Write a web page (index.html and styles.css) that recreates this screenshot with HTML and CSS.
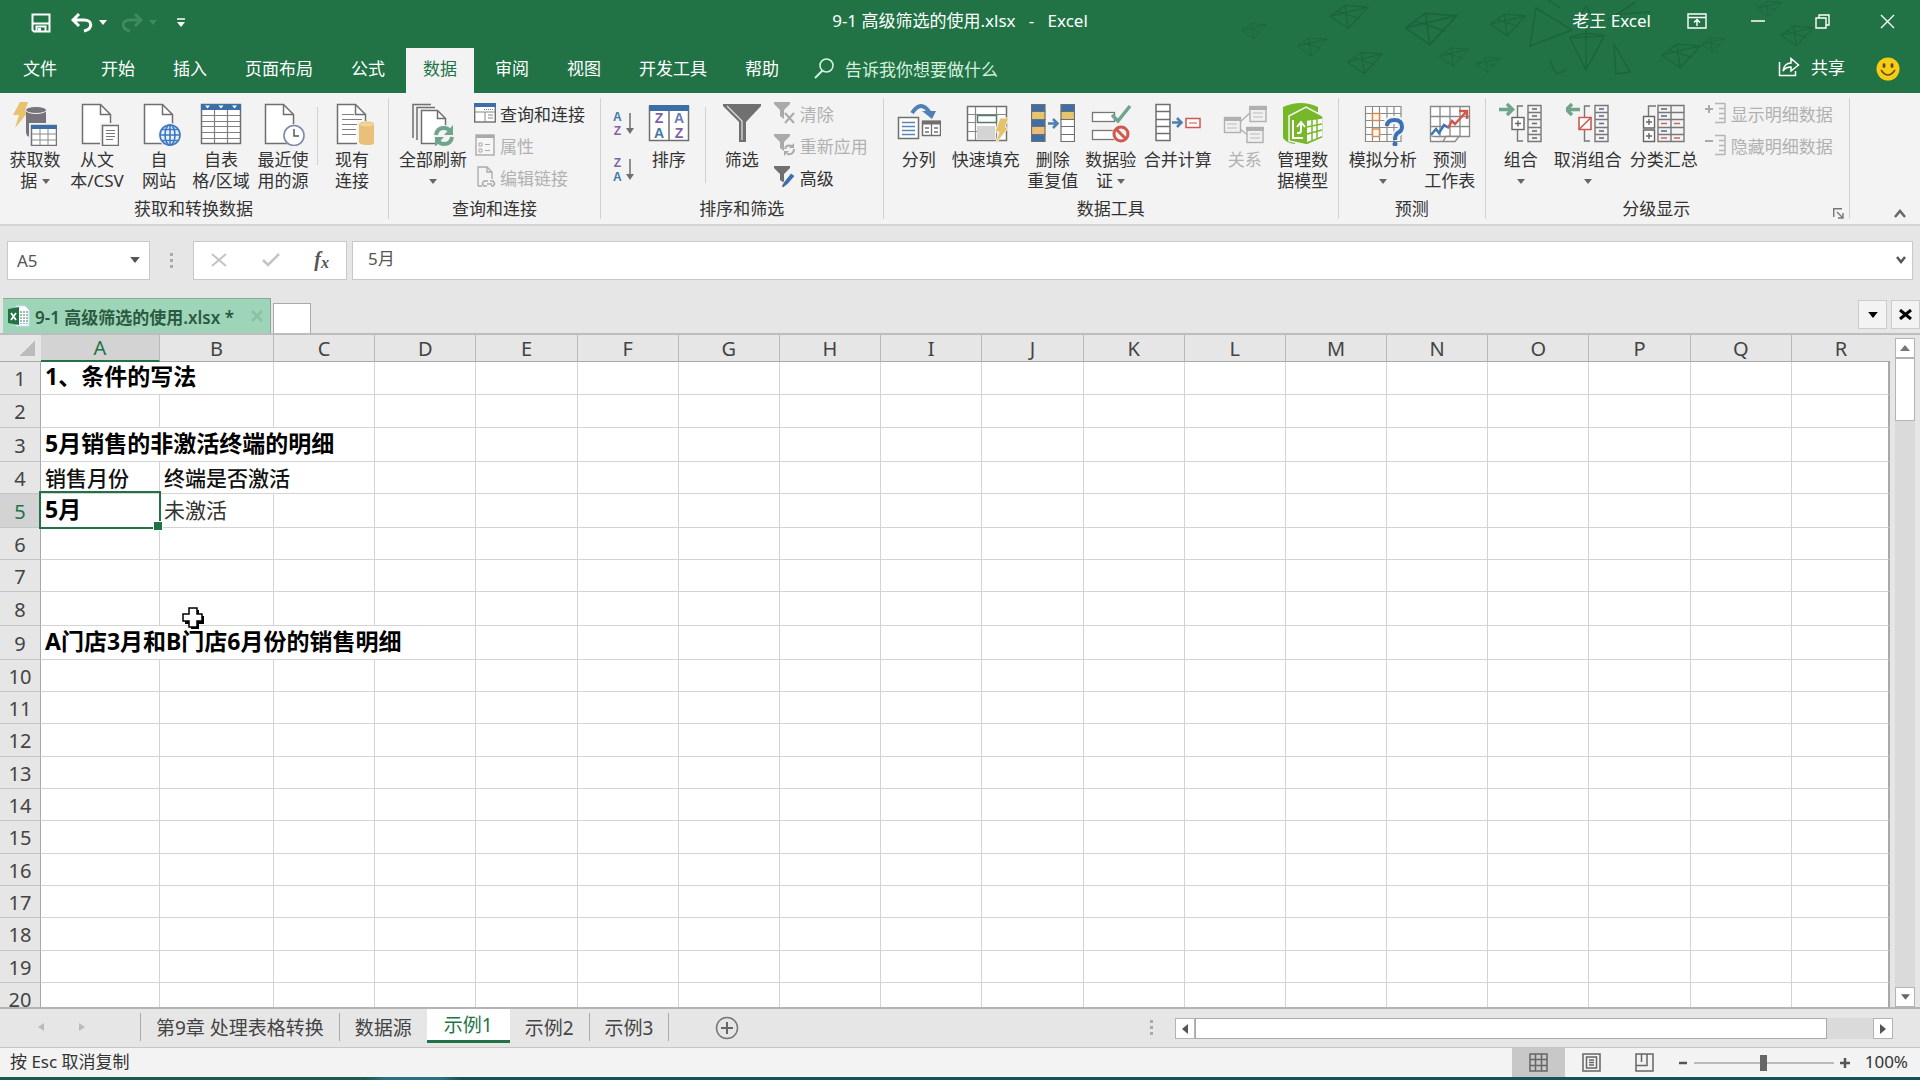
FILE: index.html
```html
<!DOCTYPE html>
<html lang="zh-CN">
<head>
  <meta charset="UTF-8">
  <meta name="viewport" content="width=device-width, initial-scale=1.0">
  <title>9-1 高级筛选的使用.xlsx - Excel</title>
  <link rel="stylesheet" href="styles.css">
</head>
<body>
  <!-- Shared icon shapes -->
  <svg class="defs" aria-hidden="true">
    <symbol id="doc" viewBox="0 0 44 44"><path d="M7.500 2.500H25.500L35.500 12.500V41.500H7.500Z" fill="#fff" stroke="#6f6f6f" stroke-width="1.500"/><path d="M25.500 2.500V12.500H35.500" fill="none" stroke="#6f6f6f" stroke-width="1.500"/></symbol>
    <symbol id="caret" viewBox="0 0 8 5"><path d="M0 0H8L4 5Z" fill="currentColor"/></symbol>
    <symbol id="funnel" viewBox="0 0 22 22"><path d="M0 0H16V2L10 8V17L6 14V8L0 2Z" fill="currentColor"/></symbol>
    <symbol id="kite" viewBox="0 0 50 34"><path d="M2 16L20 3L48 5L24 31ZM2 16L48 5M20 3L24 31M11 10L38 19" fill="none" stroke="currentColor" stroke-width="1.500"/></symbol>
  </svg>

  <header class="titlebar">
    <svg class="pattern" viewBox="0 0 690 93" aria-hidden="true">
      <use href="#kite" x="92" y="3" width="54" height="28"/>
      <use href="#kite" x="170" y="10" width="62" height="38"/>
      <use href="#kite" x="10" y="22" width="28" height="18"/>
      <use href="#kite" x="64" y="36" width="36" height="22"/>
      <use href="#kite" x="116" y="48" width="38" height="30"/>
      <use href="#kite" x="206" y="46" width="36" height="22"/>
      <use href="#kite" x="256" y="12" width="44" height="26"/>
      <use href="#kite" x="244" y="56" width="28" height="18"/>
      <path d="M300 46L306 8L342 30ZM340 38L356 70L374 36ZM356 70V20M346 24L356 6L366 24M384 44L386 74L400 72ZM330 8L318 0M378 20L406 2M320 60L326 74L336 70M390 14L420 12M340 38Q356 30 374 36" fill="none" stroke="currentColor" stroke-width="1.500"/>
      <use href="#kite" x="430" y="40" width="42" height="32"/>
      <use href="#kite" x="470" y="36" width="26" height="18"/>
      <use href="#kite" x="516" y="0" width="46" height="18"/>
      <use href="#kite" x="540" y="24" width="54" height="24"/>
    </svg>
    <div class="title-row">
      <div class="quick-access">
        <button aria-label="保存"><svg width="20" height="20" viewBox="0 0 20 20"><path d="M1.500 1.500H18.500V18.500H3L1.500 17ZM1.500 10.500H18.500M5.500 18V13.500H14.500V18" fill="none" stroke="#fff" stroke-width="2"/><path d="M7 15H10V18H7Z" fill="#fff"/></svg></button>
        <button class="undo" aria-label="撤消"><svg width="22" height="20" viewBox="0 0 22 20"><path d="M8 1L2 7L8 13M2 7H13C22 7 22 16 13 18" fill="none" stroke="#fff" stroke-width="3"/></svg><svg class="mini" width="8" height="5"><use href="#caret"/></svg></button>
        <button class="redo" aria-label="恢复" disabled><svg width="22" height="20" viewBox="0 0 22 20"><path d="M14 1L20 7L14 13M20 7H9C0 7 0 16 9 18" fill="none" stroke="currentColor" stroke-width="3"/></svg><svg class="mini" width="8" height="5"><use href="#caret"/></svg></button>
        <button aria-label="自定义快速访问工具栏"><svg width="8" height="10" viewBox="0 0 8 10"><path d="M0 1H8" stroke="#fff" stroke-width="1.500"/><path d="M0 4H8L4 9Z" fill="#fff"/></svg></button>
      </div>
      <div class="doc-title">9-1 高级筛选的使用.xlsx&nbsp;&nbsp; -&nbsp;&nbsp; Excel</div>
      <div class="window-controls">
        <span class="account">老王 Excel</span>
        <button aria-label="功能区显示选项"><svg width="20" height="16" viewBox="0 0 20 16"><path d="M1 1H19V15H1ZM1 4.500H19M10 13V7M7 9.500L10 6.500L13 9.500" fill="none" stroke="#fff" stroke-width="1.400"/></svg></button>
        <button aria-label="最小化"><svg width="14" height="14" viewBox="0 0 14 14"><path d="M0 7H14" stroke="#fff" stroke-width="1.500"/></svg></button>
        <button aria-label="还原"><svg width="15" height="15" viewBox="0 0 15 15"><path d="M1 4H11V14H1ZM4 4V1H14V11H11" fill="none" stroke="#fff" stroke-width="1.400"/></svg></button>
        <button aria-label="关闭"><svg width="15" height="15" viewBox="0 0 15 15"><path d="M1 1L14 14M14 1L1 14" stroke="#fff" stroke-width="1.400"/></svg></button>
      </div>
    </div>
    <nav class="tabs">
      <button class="tab file">文件</button>
      <button class="tab">开始</button>
      <button class="tab">插入</button>
      <button class="tab">页面布局</button>
      <button class="tab">公式</button>
      <button class="tab active">数据</button>
      <button class="tab">审阅</button>
      <button class="tab">视图</button>
      <button class="tab">开发工具</button>
      <button class="tab">帮助</button>
      <button class="tell-me"><svg width="21" height="21" viewBox="0 0 21 21"><circle cx="12.500" cy="7.500" r="6.500" fill="none" stroke="#d6f0df" stroke-width="1.600"/><path d="M8.500 12.500L1 20" stroke="#d6f0df" stroke-width="2"/></svg>告诉我你想要做什么</button>
      <button class="share"><svg width="22" height="20" viewBox="0 0 22 20"><path d="M1.500 5V18.500H17.500V14" fill="none" stroke="#fff" stroke-width="1.500"/><path d="M5 14C6 8 9 6 13 6V1.500L20.500 8L13 14V10C10 10 7 11 5 14Z" fill="none" stroke="#fff" stroke-width="1.500"/></svg>共享</button>
      <button class="smile" aria-label="反馈"><svg width="24" height="24" viewBox="0 0 24 24"><circle cx="12" cy="12" r="11.500" fill="#f8cc16"/><ellipse cx="8" cy="8.500" rx="1.500" ry="2.500" fill="#5c4a10"/><ellipse cx="16" cy="8.500" rx="1.500" ry="2.500" fill="#5c4a10"/><path d="M5 13Q12 23 19 13" fill="none" stroke="#5c4a10" stroke-width="1.500"/></svg></button>
    </nav>
  </header>

  <section class="ribbon">
    <!-- 获取和转换数据 -->
    <div class="group get-data">
      <div class="tools">
        <button class="big"><svg width="44" height="44" viewBox="0 0 44 44"><path d="M7 0H15L12 9H16L2 26L6 13H0Z" fill="#e9c26f"/><path d="M13 8V30Q13 35 18 35H33V8Z" fill="#77737a"/><ellipse cx="23" cy="8" rx="10.500" ry="3.500" fill="#77737a" stroke="#f3f3f3"/><rect x="16" y="21" width="28" height="23" fill="#f3f3f3"/><rect x="18.500" y="23.500" width="25" height="20" fill="#fff" stroke="#77737a" stroke-width="1.500"/><rect x="18" y="23" width="26" height="4" fill="#3d6ea8"/><path d="M27 27V43M35 27V43M19 32H43M19 38H43" stroke="#8a8a8a"/></svg><span>获取数<br>据 <svg width="8" height="5"><use href="#caret"/></svg></span></button>
        <button class="big"><svg width="44" height="44" viewBox="0 0 44 44"><use href="#doc"/><path d="M25 21H45V44H25Z" fill="#f3f3f3"/><path d="M27.500 23.500H43.500V43.500H27.500Z" fill="#fff" stroke="#6f6f6f" stroke-width="1.500"/><path d="M31 28.500H40M31 31.500H40M31 34.500H40M31 37.500H38" stroke="#777" stroke-width="1.200"/></svg><span>从文<br>本/CSV</span></button>
        <button class="big"><svg width="44" height="44" viewBox="0 0 44 44"><use href="#doc"/><circle cx="33" cy="33" r="12" fill="#f3f3f3"/><g fill="none" stroke="#3b78c3" stroke-width="1.600"><circle cx="33" cy="33" r="10" fill="#eaf3fc"/><ellipse cx="33" cy="33" rx="5" ry="10"/><path d="M33 23V43M23 33H43M25 27.500H41M25 38.500H41"/></g></svg><span>自<br>网站</span></button>
        <button class="big"><svg width="44" height="44" viewBox="0 0 44 44"><rect x="2.500" y="2.500" width="39" height="39" fill="#fff" stroke="#6f6f6f" stroke-width="1.500"/><rect x="2" y="2" width="40" height="6" fill="#3d6ea8"/><path d="M6 3.500H11L8.500 6.500ZM19.500 3.500H24.500L22 6.500ZM33 3.500H38L35.500 6.500Z" fill="#fff"/><path d="M15.500 8V41M28.500 8V41M3 13.500H41M3 19.500H41M3 24.500H41M3 30.500H41M3 36.500H41" stroke="#808080" stroke-width="1.200"/></svg><span>自表<br>格/区域</span></button>
        <button class="big"><svg width="44" height="44" viewBox="0 0 44 44"><use href="#doc" x="-3"/><circle cx="34" cy="33.500" r="11.500" fill="#f3f3f3"/><circle cx="33" cy="33.500" r="10" fill="#fff" stroke="#8088a8" stroke-width="1.600"/><path d="M33 27V34H38" fill="none" stroke="#555" stroke-width="1.500"/></svg><span>最近使<br>用的源</span></button>
        <i class="divider short"></i>
        <button class="big"><svg width="44" height="44" viewBox="0 0 44 44"><use href="#doc"/><path d="M12 12.500H24M12 17.500H32M12 22.500H30M12 27.500H26M12 32.500H26" stroke="#808080" stroke-width="1.200"/><path d="M27 19H46V44H27Z" fill="#f3f3f3"/><path d="M29 22V40Q29 43 37 43T45 40V22Z" fill="#e9c07a"/><ellipse cx="37" cy="22.500" rx="7.500" ry="2.500" fill="#f2d59a" stroke="#e9c07a"/></svg><span>现有<br>连接</span></button>
      </div>
      <div class="group-label">获取和转换数据</div>
    </div>

    <!-- 查询和连接 -->
    <div class="group queries">
      <div class="tools">
        <button class="big wide"><svg width="44" height="44" viewBox="0 0 44 44"><path d="M2 36V2.500H20M6 38V5.500H24" fill="none" stroke="#6f6f6f" stroke-width="1.500"/><path d="M10.500 41.500V8.500H26.500L34.500 16.500V41.500Z" fill="#fff" stroke="#6f6f6f" stroke-width="1.500"/><path d="M26.500 8.500V16.500H34.500" fill="none" stroke="#6f6f6f" stroke-width="1.500"/><circle cx="33" cy="34" r="11" fill="#f3f3f3"/><g fill="none" stroke="#6fa58d" stroke-width="4"><path d="M25 33Q26 26 33 26Q37 26 39 29"/><path d="M41 35Q40 42 33 42Q29 42 27 39"/></g><path d="M42 23V33H33ZM24 45V35H33Z" fill="#6fa58d"/></svg><span>全部刷新<br><svg width="8" height="5"><use href="#caret"/></svg></span></button>
        <div class="small-tools">
          <button><svg width="22" height="22" viewBox="0 0 22 22"><rect x=".7" y="2" width="20.600" height="18" fill="#fff" stroke="#6f6f6f" stroke-width="1.400"/><rect y="1" width="22" height="4" fill="#3d6ea8"/><path d="M1 10H21M11 10V20M14 13H19M14 16H19" stroke="#888"/><path d="M10 7.500H20" stroke="#77a" stroke-dasharray="1 1"/></svg>查询和连接</button>
          <button disabled><svg width="22" height="22" viewBox="0 0 22 22"><rect x="2" y="1" width="18" height="20" fill="#f6f6f6" stroke="#aaa" stroke-width="1.400"/><path d="M2 2.500H20" stroke="#aaa" stroke-width="3"/><path d="M5 9H8V12H5ZM5 15H8V18H5ZM11 10.500H16M11 16.500H16" stroke="#aaa" fill="none"/></svg>属性</button>
          <button disabled><svg width="22" height="22" viewBox="0 0 22 22"><path d="M4 20V1H13L18 6V13M13 1V6H18M4 20H8" fill="none" stroke="#aaa" stroke-width="1.300"/><path d="M14 15H10Q7 18 10 20H13M13 18H18M16 15H19Q22 18 19 20H17" fill="none" stroke="#aaa" stroke-width="1.600"/></svg>编辑链接</button>
        </div>
      </div>
      <div class="group-label">查询和连接</div>
    </div>

    <!-- 排序和筛选 -->
    <div class="group sort-filter">
      <div class="tools">
        <div class="az-tools">
          <button aria-label="升序"><span class="az"><b class="blue">A</b><b class="purple">Z</b></span><svg width="8" height="22" viewBox="0 0 8 22"><path d="M4 0V18" stroke="#6f6f6f" stroke-width="1.500"/><path d="M0 15H8L4 21Z" fill="#6f6f6f"/></svg></button>
          <button aria-label="降序"><span class="az"><b class="purple">Z</b><b class="blue">A</b></span><svg width="8" height="22" viewBox="0 0 8 22"><path d="M4 0V18" stroke="#6f6f6f" stroke-width="1.500"/><path d="M0 15H8L4 21Z" fill="#6f6f6f"/></svg></button>
        </div>
        <button class="big"><svg width="44" height="44" viewBox="0 0 44 44"><rect x="2.500" y="4.500" width="39" height="34" fill="#fff" stroke="#6f6f6f" stroke-width="1.500"/><rect x="2" y="3" width="40" height="6" fill="#3d6ea8"/><path d="M22 9V38" stroke="#6f6f6f" stroke-width="1.500"/><g class="sort-letters" text-anchor="middle"><text x="12" y="21" fill="#7e62a8">Z</text><text x="12" y="36" fill="#4279a8">A</text><text x="32" y="21" fill="#6a7ab5">A</text><text x="32" y="36" fill="#7e62a8">Z</text></g></svg><span>排序</span></button>
        <i class="divider"></i>
        <button class="big"><svg width="44" height="44" viewBox="0 0 44 44"><path d="M3 2H41V4L26 20V40H19V20L3 4Z" fill="#707070"/><path d="M7 4L22 19V38" fill="none" stroke="#ddd" stroke-width="1.300"/></svg><span>筛选</span></button>
        <div class="small-tools">
          <button disabled><svg width="22" height="22" viewBox="0 0 22 22"><use href="#funnel"/><path d="M11 11L20 21M20 11L11 21" stroke="#aaa" stroke-width="2"/></svg>清除</button>
          <button disabled><svg width="22" height="22" viewBox="0 0 22 22"><use href="#funnel"/><path d="M11 15Q12 10 18 12M20 15Q20 21 13 20" fill="none" stroke="#aaa" stroke-width="2"/><path d="M20 9V14H15ZM10 22V17H15Z" fill="#aaa"/></svg>重新应用</button>
          <button><svg width="22" height="22" viewBox="0 0 22 22"><use href="#funnel"/><path d="M8 22L9 17L17 7L21 10L13 19Z" fill="#3d6ea8" stroke="#f3f3f3"/><path d="M8 21L9 18L11 20Z" fill="#555"/></svg>高级</button>
        </div>
      </div>
      <div class="group-label">排序和筛选</div>
    </div>

    <!-- 数据工具 -->
    <div class="group">
      <div class="tools">
        <button class="big"><svg width="44" height="44" viewBox="0 0 44 44"><path d="M15 11Q24 -3 33 11" fill="none" stroke="#4f7fb3" stroke-width="4"/><path d="M25 9H39L35 17Z" fill="#4f7fb3"/><rect x="1.500" y="15.500" width="20" height="21" fill="#fff" stroke="#6f6f6f" stroke-width="1.500"/><path d="M5 20.500H18M5 24.500H18M5 28.500H18M5 32.500H18" stroke="#5b84b8" stroke-width="1.300"/><rect x="25.500" y="19.500" width="18" height="14" fill="#fff" stroke="#6f6f6f" stroke-width="1.500"/><path d="M25 20.500H44" stroke="#6f6f6f" stroke-width="4"/><path d="M34.500 22V33M28 26H32M37 26H41M28 30H32M37 30H41" stroke="#6f6f6f" stroke-width="1.300"/></svg><span>分列</span></button>
        <button class="big wide"><svg width="44" height="44" viewBox="0 0 44 44"><rect x="3.500" y="4.500" width="39" height="34" fill="#fff" stroke="#6f6f6f" stroke-width="1.500"/><path d="M11.500 5V38M32.500 5V38M4 12.500H42M4 20.500H12M4 29.500H42M4 12.500H12" stroke="#888" stroke-width="1.200"/><rect x="13.500" y="13.500" width="19" height="7" fill="#fff" stroke="#5a7a70" stroke-width="1.500"/><rect x="13" y="24" width="18" height="13" fill="#d4d4d4"/><path d="M36 16H45L41 25H45L31 43L35 30H31Z" fill="#e5c368" stroke="#f3f3f3"/></svg><span>快速填充</span></button>
        <button class="big"><svg width="44" height="44" viewBox="0 0 44 44"><g stroke="#6f6f6f" stroke-width="1.200"><path d="M.5 2.500H14V9.500H.5ZM.5 17.500H14V24.500H.5ZM.5 32.500H14V39.500H.5ZM30 2.500H43.500V9.500H30Z" fill="#3d6ea8"/><path d="M.5 9.500H14V17.500H.5ZM30 9.500H43.500V17.500H30Z" fill="#e4c46d"/><path d="M.5 24.500H14V32.500H.5Z" fill="#eebc72"/><path d="M30 17.500H43.500V39.500H30ZM30 24.500H43.500M30 32.500H43.500" fill="#fff"/></g><path d="M17 21.500H26M22 17L26.500 21.500L22 26" fill="none" stroke="#4f7fb3" stroke-width="2.500"/></svg><span>删除<br>重复值</span></button>
        <button class="big"><svg width="44" height="44" viewBox="0 0 44 44"><rect x="3.500" y="10.500" width="22" height="9" fill="#fff" stroke="#777" stroke-width="1.300"/><rect x="3.500" y="28.500" width="22" height="9" fill="#fff" stroke="#777" stroke-width="1.300"/><path d="M23 13L29 19L41 4" fill="none" stroke="#6fa58d" stroke-width="3.500"/><circle cx="32" cy="32" r="9" fill="#f3f3f3"/><circle cx="32" cy="32" r="7" fill="none" stroke="#d0594c" stroke-width="3"/><path d="M27 27L37 37" stroke="#d0594c" stroke-width="3"/></svg><span>数据验<br>证 <svg width="8" height="5"><use href="#caret"/></svg></span></button>
        <button class="big wide"><svg width="46" height="44" viewBox="0 0 46 44"><path d="M1 2.500H15V38.500H1ZM1 9.500H15M1 17.500H15M1 24.500H15M1 31.500H15" fill="#fff" stroke="#6f6f6f" stroke-width="1.500"/><path d="M17 20.500H26M22 16L26.500 20.500L22 25" fill="none" stroke="#4f7fb3" stroke-width="2.500"/><rect x="31" y="16.500" width="14" height="9" fill="#fff" stroke="#d0594c" stroke-width="1.500"/><path d="M34 21H42" stroke="#d88" stroke-width="1.500"/></svg><span>合并计算</span></button>
        <button class="big" disabled><svg width="44" height="44" viewBox="0 0 44 44"><g fill="#f0f0f0" stroke="#b0b0b0" stroke-width="1.400"><path d="M17 20L27 11M17 27L26 34" /><rect x="1.500" y="15.500" width="16" height="15"/><rect x="27" y="4.500" width="16" height="15"/><rect x="24" y="25.500" width="16" height="15"/></g><path d="M1 17H18M26 6H44M23 27H41" stroke="#b0b0b0" stroke-width="4"/><path d="M4 22H14M4 26H14M30 11H40M30 15H40M27 32H37M27 36H37" stroke="#bbb"/></svg><span>关系</span></button>
        <button class="big"><svg width="44" height="44" viewBox="0 0 44 44"><path d="M2 5Q20 -3 37 5V12H14V42Q5 41 2 36Z" fill="#76b82a"/><path d="M8 14L25 5L42 14V36L26 43L8 39Z" fill="#76b82a" stroke="#f3f3f3" stroke-width="1.500"/><path d="M26 18L41 16V34L26 40Z" fill="#fff"/><path d="M31 17V38M36 17V36M26 25L41 22M26 32L41 28M26 18L41 16" stroke="#76b82a" stroke-width="1.500"/><path d="M12 18V36H22M16 31H18Q20 31 20 28V22M16 25L20 20L24 25" fill="none" stroke="#fff" stroke-width="2"/></svg><span>管理数<br>据模型</span></button>
      </div>
      <div class="group-label">数据工具</div>
    </div>

    <!-- 预测 -->
    <div class="group">
      <div class="tools">
        <button class="big wide"><svg width="44" height="44" viewBox="0 0 44 44"><path d="M4.500 4.500H40V39.500H4.500ZM11.500 4V40M18.500 4V40M26 4V40M33 4V40M4 11.500H40M4 18.500H40M4 25.500H40M4 32.500H40" fill="#fff" stroke="#8a8a8a" stroke-width="1.200"/><path d="M11.500 11.500H18.500V18.500H11.500ZM11.500 27H18.500V34.500H11.500Z" fill="#fff" stroke="#e08a4a" stroke-width="1.600"/><path d="M26 24Q26 18 33.500 18T41 25Q41 29 36.500 31Q34 33 34 38" fill="none" stroke="#f3f3f3" stroke-width="8"/><path d="M26 24Q26 18 33.500 18T41 25Q41 29 36.500 31Q34 33 34 38" fill="none" stroke="#3b72b5" stroke-width="4"/><circle cx="34" cy="42" r="2.500" fill="#3b72b5"/></svg><span>模拟分析<br><svg width="8" height="5"><use href="#caret"/></svg></span></button>
        <button class="big"><svg width="44" height="44" viewBox="0 0 44 44"><path d="M2.500 4.500H41.500V34.500H2.500ZM12 4V34M22 4V34M32 4V34M2 14.500H41M2 24.500H41" fill="#fff" stroke="#888" stroke-width="1.300"/><path d="M2.500 34V39.500H15L18 34.500H31L27 39.500H15" fill="#fff" stroke="#888" stroke-width="1.300"/><path d="M3 33L8 27L11 31L16 23L21 26" fill="none" stroke="#3d78b0" stroke-width="2.500"/><path d="M20 26L24 19L27 22L38 10M31 9H39V17" fill="none" stroke="#d0594c" stroke-width="2.500"/></svg><span>预测<br>工作表</span></button>
      </div>
      <div class="group-label">预测</div>
    </div>

    <!-- 分级显示 -->
    <div class="group outline">
      <div class="tools">
        <button class="big"><svg width="44" height="44" viewBox="0 0 44 44"><path d="M0 7.500H12M8 2L13.500 7.500L8 13" fill="none" stroke="#6fa58d" stroke-width="3.500"/><path d="M24 4H18.500V39H24M29 3.500H42V39.500H29ZM29 10.500H42M29 17.500H42M29 25.500H42M29 32.500H42" fill="none" stroke="#777" stroke-width="1.400"/><rect x="13" y="15.500" width="12" height="12" fill="#fff" stroke="#666" stroke-width="1.400"/><path d="M16 21.500H22M19 18.500V24.500M33 7H38M33 14H38M33 21.500H38M33 29H38M33 36H38" stroke="#666" stroke-width="1.400"/></svg><span>组合<br><svg width="8" height="5"><use href="#caret"/></svg></span></button>
        <button class="big wide"><svg width="44" height="44" viewBox="0 0 44 44"><path d="M14 7.500H2M6 2L.5 7.500L6 13" fill="none" stroke="#6fa58d" stroke-width="3.500"/><path d="M24 4H18.500V39H24M29 3.500H42V39.500H29ZM29 10.500H42M29 17.500H42M29 25.500H42M29 32.500H42" fill="none" stroke="#777" stroke-width="1.400"/><path d="M13 15.500H25V27.500H13Z" fill="#fff" stroke="#d0594c" stroke-width="1.600"/><path d="M13 27.500L25 15.500" stroke="#d0594c" stroke-width="1.600"/><path d="M33 7H38M33 14H38M33 21.500H38M33 29H38M33 36H38" stroke="#56658a" stroke-width="1.400"/></svg><span>取消组合<br><svg width="8" height="5"><use href="#caret"/></svg></span></button>
        <button class="big wide"><svg width="44" height="44" viewBox="0 0 44 44"><path d="M6.500 14V4H14M16 3.500H42V39.500H16ZM29 3.500V39M16 10.500H42M16 17.500H42M16 25.500H42M16 32.500H42" fill="none" stroke="#777" stroke-width="1.400"/><path d="M1.500 14.500H12.500V26H1.500ZM1.500 28H12.500V39.500H1.500Z" fill="#fff" stroke="#666" stroke-width="1.400"/><path d="M4 20H10M7 17V23M4 34H10M7 31V37M19 7H25" stroke="#666" stroke-width="1.400"/><path d="M19 14H25M19 29H25" stroke="#56658a" stroke-width="1.400"/><path d="M19 21.500H25M32 21.500H38M19 36H25M32 36H38" stroke="#c66" stroke-width="1.400"/></svg><span>分类汇总</span></button>
        <div class="small-tools">
          <button disabled><svg width="22" height="22" viewBox="0 0 22 22"><path d="M0 7H8M4 3V11" stroke="#aaa" stroke-width="2"/><path d="M10 1.500H20M14 6.500H20M14 11.500H20M14 16.500H20M10 20.500H20M20 1V21" stroke="#b5b5b5" stroke-width="1.400"/></svg>显示明细数据</button>
          <button disabled><svg width="22" height="22" viewBox="0 0 22 22"><path d="M0 7H8" stroke="#aaa" stroke-width="2"/><path d="M10 1.500H20M14 6.500H20M14 11.500H20M14 16.500H20M10 20.500H20M20 1V21" stroke="#b5b5b5" stroke-width="1.400"/></svg>隐藏明细数据</button>
        </div>
      </div>
      <div class="group-label">分级显示</div>
      <button class="launcher" aria-label="分级显示设置"><svg width="11" height="11" viewBox="0 0 11 11"><path d="M.7 9V.7H9M4 4L9 9M10 5V10H5" fill="none" stroke="#777" stroke-width="1.400"/></svg></button>
    </div>
    <button class="collapse" aria-label="折叠功能区"><svg width="12" height="9" viewBox="0 0 12 9"><path d="M1 8L6 2L11 8" fill="none" stroke="#666" stroke-width="2.500"/></svg></button>
  </section>

  <section class="formula-bar">
    <div class="name-box">
      <input type="text" value="A5" aria-label="名称框">
      <button aria-label="名称列表"><svg width="10" height="6"><use href="#caret"/></svg></button>
    </div>
    <i class="dots"></i>
    <div class="fx-box">
      <button aria-label="取消" disabled><svg width="16" height="14" viewBox="0 0 16 14"><path d="M1 1L15 13M15 1L1 13" stroke="#c4c4c4" stroke-width="2"/></svg></button>
      <button aria-label="输入" disabled><svg width="18" height="14" viewBox="0 0 18 14"><path d="M1 7L6 12L17 1" fill="none" stroke="#c4c4c4" stroke-width="2.500"/></svg></button>
      <button class="fx" aria-label="插入函数">f<sub>x</sub></button>
    </div>
    <div class="formula-box">
      <input type="text" value="5月" aria-label="编辑栏">
      <button aria-label="展开编辑栏"><svg width="10" height="8" viewBox="0 0 10 8"><path d="M1 1L5 6L9 1" fill="none" stroke="#555" stroke-width="2.500"/></svg></button>
    </div>
  </section>

  <section class="file-tabs">
    <button class="file-tab">
      <svg width="22" height="22" viewBox="0 0 22 22"><path d="M8 1H17L21 5V21H8Z" fill="#fff" stroke="#cde"/><path d="M13 6V19M16 6V19M19 6V19" stroke="#9bb" stroke-width="2" stroke-dasharray="2 1"/><path d="M0 4L11 2V20L0 18Z" fill="#217346"/><path d="M3 8L8 15M8 8L3 15" stroke="#fff" stroke-width="1.800"/></svg>
      9-1 高级筛选的使用.xlsx *
      <svg class="tab-close" width="12" height="12" viewBox="0 0 12 12"><path d="M1 1L11 11M11 1L1 11" stroke="#8fc0a6" stroke-width="3"/></svg>
    </button>
    <button class="blank-tab" aria-label="新标签"></button>
    <div class="file-actions">
      <button aria-label="窗口列表"><svg width="10" height="6"><use href="#caret"/></svg></button>
      <button aria-label="关闭窗口"><svg width="13" height="11" viewBox="0 0 13 11"><path d="M1 1L12 10M12 1L1 10" stroke="#000" stroke-width="3"/></svg></button>
    </div>
  </section>

  <main class="sheet">
    <div class="grid">
      <table>
        <colgroup><col class="num"><col class="col-a"><col class="col-b"><col span="15"><col class="col-r"></colgroup>
        <thead>
          <tr id="letters"><th class="corner"></th></tr>
        </thead>
        <tbody id="rows"></tbody>
      </table>
      <svg class="cell-cursor" width="22" height="22" viewBox="0 0 22 22"><path d="M9 3H17V9H22V17H17V22H9V17H3V9H9Z" fill="#000"/><path d="M7 1H15V7H20V14H15V20H7V14H1V7H7Z" fill="#fff" stroke="#000" stroke-width="1.500"/></svg>
    </div>
    <div class="v-scroll">
      <button aria-label="向上滚动"><svg width="10" height="6" viewBox="0 0 10 6"><path d="M0 6H10L5 0Z" fill="#777"/></svg></button>
      <i class="v-thumb"></i>
      <button class="down" aria-label="向下滚动"><svg width="9" height="6"><use href="#caret"/></svg></button>
    </div>
  </main>

  <section class="sheet-bar">
    <div class="sheet-nav">
      <button aria-label="上一个工作表" disabled><svg width="6" height="8" viewBox="0 0 6 8"><path d="M6 0V8L0 4Z" fill="#bbb"/></svg></button>
      <button aria-label="下一个工作表" disabled><svg width="6" height="8" viewBox="0 0 6 8"><path d="M0 0V8L6 4Z" fill="#bbb"/></svg></button>
    </div>
    <button class="sheet-tab">第9章 处理表格转换</button>
    <button class="sheet-tab">数据源</button>
    <button class="sheet-tab current">示例1</button>
    <button class="sheet-tab">示例2</button>
    <button class="sheet-tab">示例3</button>
    <button class="add-sheet" aria-label="新工作表"><svg width="24" height="24" viewBox="0 0 24 24"><circle cx="12" cy="12" r="10.500" fill="none" stroke="#777" stroke-width="1.500"/><path d="M12 6V18M6 12H18" stroke="#666" stroke-width="2"/></svg></button>
    <i class="dots"></i>
    <div class="h-scroll">
      <button aria-label="向左滚动"><svg width="6" height="10" viewBox="0 0 6 10"><path d="M6 0V10L0 5Z" fill="#555"/></svg></button>
      <i class="h-thumb"></i>
      <button class="right" aria-label="向右滚动"><svg width="6" height="10" viewBox="0 0 6 10"><path d="M0 0V10L6 5Z" fill="#555"/></svg></button>
    </div>
  </section>

  <footer class="status">
    <span>按 Esc 取消复制</span>
    <div class="views">
      <button class="on" aria-label="普通"><svg width="19" height="19" viewBox="0 0 19 19"><path d="M1 1H18V18H1ZM6.500 1V18M12.500 1V18M1 6.500H18M1 12.500H18" fill="none" stroke="#666" stroke-width="1.500"/></svg></button>
      <button aria-label="页面布局"><svg width="19" height="19" viewBox="0 0 19 19"><path d="M1 1H18V18H1ZM4.500 4H14.500V15H4.500ZM7 7H12M7 9.500H12M7 12H12" fill="none" stroke="#666" stroke-width="1.500"/></svg></button>
      <button aria-label="分页预览"><svg width="19" height="19" viewBox="0 0 19 19"><path d="M1 1H18V18H1ZM1 12.500H12V1M6.500 1V9" fill="none" stroke="#666" stroke-width="1.500"/></svg></button>
    </div>
    <div class="zoom">
      <button aria-label="缩小"><svg width="10" height="10" viewBox="0 0 10 10"><path d="M1 5H9" stroke="#555" stroke-width="2.500"/></svg></button>
      <input type="range" min="0" max="200" value="100" aria-label="缩放">
      <button aria-label="放大"><svg width="10" height="10" viewBox="0 0 10 10"><path d="M0 5H10M5 0V10" stroke="#555" stroke-width="2.500"/></svg></button>
      <span>100%</span>
    </div>
  </footer>
  <div class="taskbar-edge"></div>

  <script>
    // Cell contents: row -> list of [column, text, class, colspan]
    const cells = {
      1: [[0, "1、条件的写法", "heading", 2]],
      3: [[0, "5月销售的非激活终端的明细", "heading", 3]],
      4: [[0, "销售月份", "field", 1], [1, "终端是否激活", "field", 2]],
      5: [[0, "5月", "heading selected", 1], [1, "未激活", "value", 1]],
      9: [[0, "A门店3月和B门店6月份的销售明细", "heading", 4]]
    };
    const COLS = 18;

    // Column letters A - R
    const letters = document.getElementById("letters");
    for (let c = 0; c < COLS; c++) {
      const th = document.createElement("th");
      th.textContent = String.fromCharCode(65 + c);
      if (c === 0) th.className = "picked";
      letters.appendChild(th);
    }

    // Rows 1 - 20
    const body = document.getElementById("rows");
    for (let r = 1; r <= 20; r++) {
      const tr = document.createElement("tr");
      const th = document.createElement("th");
      th.textContent = r;
      if (r === 5) th.className = "picked";
      tr.appendChild(th);

      for (let c = 0; c < COLS; c++) {
        const td = document.createElement("td");
        const cell = (cells[r] || []).find(item => item[0] === c);
        if (cell) {
          td.textContent = cell[1];
          td.className = cell[2];
          td.colSpan = cell[3];
          c += cell[3] - 1;
        }
        tr.appendChild(td);
      }
      body.appendChild(tr);
    }
  </script>
</body>
</html>
```
FILE: styles.css
```css
* {
  box-sizing: border-box;
}
body {
  margin: 0;
  height: 100vh;
  display: flex;
  flex-direction: column;
  overflow: hidden;
  font-family: "Noto Sans", "Noto Sans CJK SC", sans-serif;
  font-size: 17px;
  color: #333;
  background: #e6e6e6;
}
button, input {
  font: inherit;
  color: inherit;
  background: none;
  border: none;
  padding: 0;
  margin: 0;
}
button {
  cursor: pointer;
  white-space: nowrap;
}
button:disabled {
  color: #b1b1b1;
  cursor: default;
}
svg {
  display: block;
  flex: none;
}
.defs {
  position: absolute;
  width: 0;
  height: 0;
}

/* Title bar */
.titlebar {
  position: relative;
  flex: none;
  background: #217346;
  color: #fff;
}
.pattern {
  position: absolute;
  right: 0;
  top: 0;
  width: 690px;
  height: 93px;
  color: #1c653c;
}
.title-row {
  position: relative;
  display: grid;
  grid-template-columns: 1fr auto 1fr;
  align-items: center;
  height: 48px;
  padding-bottom: 6px;
}
.quick-access {
  display: flex;
  align-items: center;
  padding: 3px 0 0 31px;
}
.quick-access button {
  display: flex;
  align-items: center;
  gap: 6px;
  margin-right: 20px;
}
.quick-access .undo {
  margin-right: 14px;
}
.quick-access .redo {
  color: #3f8a60;
}
.doc-title {
  line-height: 24px;
}
.window-controls {
  display: flex;
  align-items: center;
  justify-content: flex-end;
}
.window-controls button {
  display: flex;
  justify-content: center;
  width: 65px;
}
.account {
  line-height: 24px;
  margin-right: 18px;
}
.window-controls .account + button {
  width: 56px;
}

/* Ribbon tabs */
.tabs {
  position: relative;
  display: flex;
  align-items: stretch;
  height: 45px;
}
.tab {
  padding: 0 17px 7px;
  margin: 0 2px;
}
.tab.file {
  padding: 0 23px 7px;
  margin-left: 0;
}
.tab.active {
  background: #f3f3f3;
  color: #217346;
}
.tell-me {
  display: flex;
  align-items: center;
  gap: 10px;
  margin-left: 16px;
  padding-bottom: 4px;
  color: #d6f0df;
}
.share {
  display: flex;
  align-items: center;
  gap: 11px;
  margin-left: auto;
  padding-bottom: 8px;
}
.smile {
  margin: 0 20px 4px 31px;
}

/* Ribbon */
.ribbon {
  flex: none;
  display: flex;
  height: 133px;
  background: #f3f3f3;
  border-bottom: 2px solid #d5d5d5;
}
.group {
  position: relative;
  display: flex;
  flex-direction: column;
  margin: 5px 0;
  padding: 4px 6px 0;
  border-right: 1px solid #d2d2d2;
}
.tools {
  display: flex;
  height: 93px;
}
.group-label {
  text-align: center;
  line-height: 24px;
  margin-top: 5px;
  height: 22px;
}
.big {
  display: flex;
  flex-direction: column;
  align-items: center;
  gap: 3px;
  width: 58px;
  line-height: 21px;
}
.big.wide {
  width: 76px;
}
.big span svg {
  display: inline-block;
  vertical-align: 3px;
  color: #666;
}
.get-data .tools {
  gap: 4px;
}
.get-data {
  padding-right: 7px;
}
.divider {
  width: 1px;
  height: 76px;
  margin: 5px 7px;
  background: #d2d2d2;
}
.divider.short {
  height: 58px;
  margin: 5px 1px;
}
.small-tools {
  display: flex;
  flex-direction: column;
  gap: 10px;
  padding-left: 3px;
}
.small-tools button {
  display: flex;
  align-items: center;
  gap: 4px;
  height: 22px;
}
.small-tools svg {
  color: #707070;
}
.small-tools button:disabled svg {
  color: #aaa;
}
.queries .small-tools,
.sort-filter .small-tools {
  padding-right: 9px;
}
.az-tools {
  display: flex;
  flex-direction: column;
  gap: 18px;
  padding: 8px 6px 0;
}
.az-tools button {
  display: flex;
  align-items: center;
  gap: 4px;
  height: 28px;
}
.az {
  display: flex;
  flex-direction: column;
  font-family: "Liberation Sans", sans-serif;
  font-size: 12px;
  line-height: 14px;
}
.sort-letters {
  font-family: "Liberation Sans", sans-serif;
  font-size: 14px;
  font-weight: 600;
}
.blue {
  color: #4279a8;
}
.purple {
  color: #7e62a8;
}
.outline {
  padding-right: 16px;
}
.outline .group-label {
  padding-right: 12px;
}
.launcher {
  position: absolute;
  right: 5px;
  bottom: 0;
}
.collapse {
  align-self: flex-end;
  margin: 0 14px 6px auto;
}

/* Formula bar */
.formula-bar {
  flex: none;
  display: flex;
  align-items: center;
  height: 72px;
  padding: 0 7px 4px;
  color: #555;
}
.name-box, .fx-box, .formula-box {
  display: flex;
  align-items: center;
  height: 39px;
  background: #fff;
  border: 1px solid #c8c8c8;
}
.name-box {
  width: 143px;
  padding: 0 9px;
}
.name-box input, .formula-box input {
  flex: 1;
  min-width: 0;
}
.dots {
  width: 3px;
  height: 15px;
  background: repeating-linear-gradient(#aaa 0 3px, transparent 3px 6px);
}
.formula-bar .dots {
  margin: 0 20px;
}
.fx-box {
  width: 154px;
  justify-content: space-between;
  padding: 0 17px;
  margin-right: 5px;
}
.fx {
  font: italic bold 20px "Liberation Serif", serif;
}
.fx sub {
  font-size: 16px;
  vertical-align: -2px;
}
.formula-box {
  flex: 1;
  padding: 0 6px 0 15px;
}
.formula-box input {
  padding-bottom: 6px;
}

/* Workbook tabs */
.file-tabs {
  flex: none;
  display: flex;
  align-items: flex-end;
  height: 37px;
  padding-left: 3px;
  border-bottom: 2px solid #bdbdbd;
}
.file-tab {
  display: flex;
  align-items: center;
  gap: 5px;
  width: 268px;
  height: 35px;
  padding-left: 5px;
  background: #9ed5b8;
  border-top: 1px solid #8aa898;
  border-right: 1px solid #8aa898;
  color: #2b5a41;
  font-weight: 600;
}
.tab-close {
  margin: 0 7px 0 auto;
}
.blank-tab {
  width: 38px;
  height: 30px;
  margin-left: 2px;
  background: #fff;
  border: 1px solid #aaa;
  border-bottom: none;
}
.file-actions {
  display: flex;
  gap: 4px;
  margin: 0 0 4px auto;
  color: #000;
}
.file-actions button {
  display: flex;
  align-items: center;
  justify-content: center;
  width: 29px;
  height: 29px;
  background: #f3f3f3;
  border: 1px solid #ccc;
}

/* Sheet */
.sheet {
  flex: 1;
  min-height: 0;
  display: flex;
  border-bottom: 2px solid #b4b4b4;
}
.grid {
  position: relative;
  flex: 1;
  overflow: hidden;
}
table {
  width: 100%;
  table-layout: fixed;
  border-collapse: separate;
  border-spacing: 0;
}
.num {
  width: 41px;
}
.col-a {
  width: 119px;
}
.col-b {
  width: 114px;
}
.col-r {
  width: 98px;
}
th {
  padding: 2px 0 0;
  font-size: 20px;
  line-height: 24px;
  font-weight: 400;
  color: #444;
  background: #e6e6e6;
  border-right: 1px solid #b8b8b8;
  border-bottom: 1px solid #a8a8a8;
}
thead th {
  height: 27px;
}
thead th:last-child {
  border-right: none;
}
tbody th {
  border-bottom-color: #c4c4c4;
  border-right-color: #a8a8a8;
}
.corner {
  background: linear-gradient(135deg, #e6e6e6 50%, #bbb 50%) 20px 6px / 15px 15px no-repeat #e6e6e6;
  border-right: none;
}
th.picked {
  background: #d3d3d3;
  color: #217346;
}
thead th.picked {
  padding-top: 1px;
  border-bottom: 2px solid #217346;
}
td {
  height: 32px;
  padding: 0 0 0 4px;
  line-height: 26px;
  white-space: nowrap;
  background: #fff;
  border-right: 1px solid #d4d4d4;
  border-bottom: 1px solid #d4d4d4;
}
td:last-child {
  border-right: 2px solid #a8a8a8;
}
tr:nth-child(1) td, tr:nth-child(2) td, tr:nth-child(12) td, tr:nth-child(15) td, tr:nth-child(18) td {
  height: 33px;
}
tr:nth-child(3) td, tr:nth-child(5) td, tr:nth-child(8) td, tr:nth-child(9) td {
  height: 34px;
}
.heading {
  padding-bottom: 4px;
  font-size: 23px;
  font-weight: 700;
  color: #000;
}
.field {
  font-size: 21px;
  font-weight: 500;
  color: #111;
}
.value {
  padding-bottom: 2px;
  font-size: 21px;
}
.selected {
  position: relative;
}
.selected::before {
  content: "";
  position: absolute;
  inset: -3px -2px -2px -2px;
  border: 2px solid #217346;
}
.selected::after {
  content: "";
  position: absolute;
  right: -4px;
  bottom: -4px;
  width: 8px;
  height: 8px;
  background: #217346;
  border: 1px solid #fff;
}
.cell-cursor {
  position: absolute;
  left: 182px;
  top: 272px;
}
.v-scroll {
  display: flex;
  flex-direction: column;
  width: 20px;
  margin: 3px 5px 0;
  background: #dadada;
}
.v-scroll button, .h-scroll button {
  display: flex;
  align-items: center;
  justify-content: center;
  flex: none;
  width: 20px;
  height: 20px;
  background: #fff;
  border: 1px solid #b4b4b4;
  color: #666;
}
.v-thumb {
  height: 63px;
  background: #fff;
  border: 1px solid #b4b4b4;
}
.v-scroll .down {
  margin-top: auto;
}

/* Sheet tabs */
.sheet-bar {
  flex: none;
  display: flex;
  height: 39px;
  border-bottom: 1px solid #c6c6c6;
  font-size: 19px;
  color: #444;
}
.sheet-nav {
  display: flex;
  gap: 35px;
  width: 140px;
  height: 35px;
  padding-left: 38px;
}
.sheet-tab {
  height: 28px;
  margin-top: 4px;
  padding: 0 15px 6px;
  border-right: 1px solid #aaa;
}
.sheet-nav + .sheet-tab {
  border-left: 1px solid #aaa;
}
.sheet-tab.current {
  height: 34px;
  margin: 0 0 0 -1px;
  padding: 0 17px 2px;
  background: #fff;
  color: #217346;
  border-right: none;
  border-bottom: 3px solid #217346;
}
.add-sheet {
  height: 38px;
  margin-left: 46px;
}
.sheet-bar .dots {
  margin: 11px 22px 0 auto;
}
.h-scroll {
  display: flex;
  width: 37.400%;
  height: 21px;
  margin: 9px 27px 0 0;
  background: #dadada;
}
.h-scroll button {
  height: 21px;
}
.h-thumb {
  width: 88%;
  background: #fff;
  border: 1px solid #aaa;
}
.h-scroll .right {
  margin-left: auto;
}

/* Status bar */
.status {
  flex: none;
  display: flex;
  align-items: center;
  height: 29px;
  padding: 0 12px 0 10px;
  background: #f3f3f3;
}
.status span {
  line-height: 24px;
  padding-bottom: 2px;
}
.views {
  display: flex;
  height: 100%;
  margin-left: auto;
}
.views button {
  display: flex;
  align-items: center;
  justify-content: center;
  width: 53px;
}
.views .on {
  background: #c8c8c8;
}
.zoom {
  display: flex;
  align-items: center;
  gap: 6px;
  margin-left: 7px;
}
.zoom input {
  appearance: none;
  width: 140px;
  height: 16px;
}
.zoom input::-webkit-slider-runnable-track {
  height: 16px;
  background: linear-gradient(#bbb, #bbb) center / 100% 2px no-repeat;
}
.zoom input::-webkit-slider-thumb {
  appearance: none;
  width: 7px;
  height: 16px;
  background: #666;
}
.zoom span {
  margin-left: 9px;
}
.taskbar-edge {
  flex: none;
  height: 3px;
  background: linear-gradient(90deg, #1c5a50 0 19%, #2a7080 20% 23%, #1a5058 24%);
}
```
